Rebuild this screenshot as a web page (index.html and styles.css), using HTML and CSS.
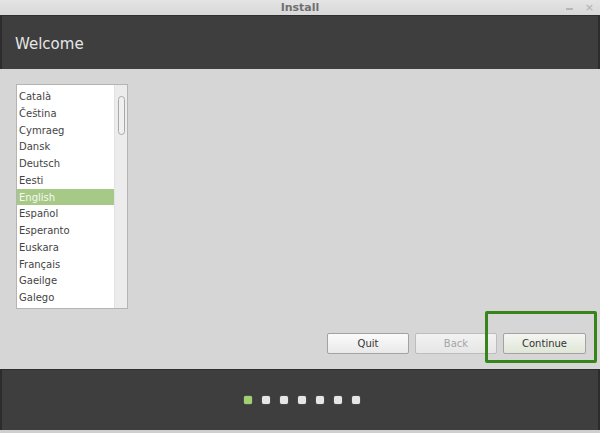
FILE: index.html
```html
<!DOCTYPE html>
<html>
<head>
<meta charset="utf-8">
<link rel="stylesheet" href="styles.css">
</head>
<body>
<div class="window">
  <div class="titlebar">
    <span class="title">Install</span>
    <div class="controls">
      <span class="ctl-min"></span>
      <span class="ctl-close">×</span>
    </div>
  </div>
  <div class="header"><h1>Welcome</h1></div>
  <div class="content">
    <div class="listbox">
      <ul class="langs">
        <li>Català</li>
        <li>Čeština</li>
        <li>Cymraeg</li>
        <li>Dansk</li>
        <li>Deutsch</li>
        <li>Eesti</li>
        <li class="selected">English</li>
        <li>Español</li>
        <li>Esperanto</li>
        <li>Euskara</li>
        <li>Français</li>
        <li>Gaeilge</li>
        <li>Galego</li>
      </ul>
      <div class="scrollbar"><div class="thumb"></div></div>
    </div>
    <div class="buttons">
      <button class="btn">Quit</button>
      <button class="btn disabled">Back</button>
      <button class="btn primary">Continue</button>
    </div>
    <div class="highlight"></div>
  </div>
  <div class="footer">
    <div class="dots">
      <span class="dot active"></span>
      <span class="dot"></span>
      <span class="dot"></span>
      <span class="dot"></span>
      <span class="dot"></span>
      <span class="dot"></span>
      <span class="dot"></span>
    </div>
  </div>
  <div class="bottomline"></div>
</div>
</body>
</html>
```

FILE: styles.css
```css
* { box-sizing: border-box; }
html, body { margin: 0; padding: 0; }
body {
  width: 600px;
  height: 433px;
  overflow: hidden;
  font-family: "DejaVu Sans", sans-serif;
  background: #d6d6d6;
}
.window {
  width: 600px;
  height: 433px;
  display: flex;
  flex-direction: column;
}
.titlebar {
  height: 16px;
  background: linear-gradient(#e4e4e4, #d8d8d8);
  display: flex;
  align-items: center;
  justify-content: center;
  position: relative;
  border-bottom: 1px solid #2e2e2e;
}
.title {
  font-size: 11px;
  font-weight: bold;
  color: #707070;
  line-height: 16px;
}
.controls {
  position: absolute;
  right: 6px;
  top: 0;
  height: 16px;
  display: flex;
  align-items: center;
  gap: 12px;
}
.ctl-min {
  width: 7px;
  height: 2px;
  background: #b5b5b5;
  margin-top: 2px;
}
.ctl-close {
  font-size: 11px;
  color: #b0b0b0;
  line-height: 16px;
}
.header {
  height: 53px;
  background: #3e3e3e;
  border-left: 2px solid #2c2c2c;
  border-right: 2px solid #2c2c2c;
  display: flex;
  align-items: center;
  padding-left: 13px;
}
.header h1 {
  margin: 0;
  font-weight: normal;
  font-size: 15px;
  color: #e6e6e6;
  padding-top: 2px;
}
.content {
  height: 300px;
  position: relative;
  display: flex;
  flex-direction: column;
  padding: 15px 14px 15px 16px;
  background: #d6d6d6;
}
.listbox {
  width: 112px;
  height: 225px;
  background: #fff;
  border: 1px solid #b4b4b4;
  display: flex;
}
.langs {
  list-style: none;
  margin: 0;
  padding: 3px 0 0 0;
  flex: 1;
}
.langs li {
  height: 16.75px;
  line-height: 17.5px;
  font-size: 10px;
  color: #444;
  padding-left: 2px;
}
.langs li.selected {
  background: #a6c987;
  color: #f6f9f2;
}
.scrollbar {
  width: 13px;
  background: #ececec;
  border-left: 1px solid #e2e2e2;
  padding-top: 11px;
  display: flex;
  justify-content: center;
}
.thumb {
  width: 7px;
  height: 39px;
  border: 1px solid #a8a8a8;
  border-radius: 4px;
  background: #f0f0f0;
}
.buttons {
  margin-top: auto;
  display: flex;
  justify-content: flex-end;
  gap: 6px;
}
.btn {
  width: 82px;
  height: 21px;
  font-family: "DejaVu Sans", sans-serif;
  font-size: 10px;
  color: #333;
  background: linear-gradient(#fbfbfb, #e9e9e9);
  border: 1px solid #a3a3a3;
  border-radius: 2px;
  padding: 0;
}
.btn.disabled {
  color: #a5a5a5;
  border-color: #bdbdbd;
  background: linear-gradient(#f2f2f2, #e6e6e6);
}
.btn.primary {
  width: 83px;
  background: linear-gradient(#f4f6f1, #dfe6d7);
}
.highlight {
  position: absolute;
  left: 485px;
  top: 242px;
  width: 112px;
  height: 52px;
  border: 3px solid #36841a;
  border-radius: 2px;
}
.footer {
  height: 61px;
  background: #3e3e3e;
  border-top: 1px solid #2e2e2e;
  border-left: 2px solid #2c2c2c;
  border-right: 2px solid #2c2c2c;
  display: flex;
  align-items: center;
  justify-content: center;
  padding-left: 4px;
}
.dots {
  display: flex;
  gap: 10px;
}
.dot {
  width: 8px;
  height: 8px;
  border-radius: 2px;
  background: #e6e6e6;
  box-shadow: 0 0 1px #bdbdbd;
}
.dot.active {
  background: #a4d072;
  box-shadow: 0 0 1px #cfe8b5;
}
.bottomline {
  height: 3px;
  background: #cfcfcf;
}
```
